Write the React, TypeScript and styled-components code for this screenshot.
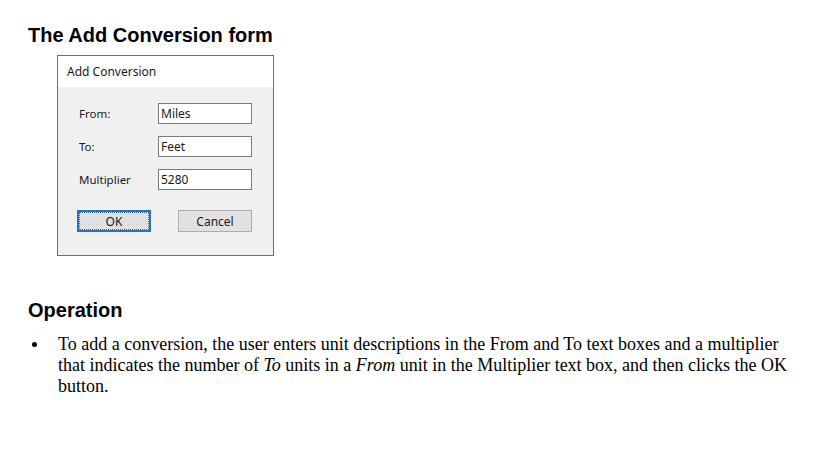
import React from "react";
import styled, { createGlobalStyle } from "styled-components";

const GlobalStyle = createGlobalStyle`
	html, body {
		margin: 0;
		padding: 0;
		background: #ffffff;
	}
	body {
		width: 825px;
		height: 462px;
		overflow: hidden;
	}
`;

const Page = styled.div`
	padding: 23px 0 0 28px;
	color: #000;
`;

const Heading = styled.h2`
	margin: 0;
	font-family: "Liberation Sans", Arial, sans-serif;
	font-weight: bold;
	font-size: 20px;
	line-height: 24px;
`;

const Dialog = styled.div`
	margin: 8px 0 0 29px;
	width: 215px;
	height: 199px;
	border: 1px solid #6f6f6f;
	background: #f0f0f0;
	display: flex;
	flex-direction: column;
	font-family: "Noto Sans", "Open Sans", sans-serif;
	font-size: 11.5px;
	color: #1a1a1a;
`;

const TitleBar = styled.div`
	height: 31px;
	background: #ffffff;
	padding-left: 9px;
	display: flex;
	align-items: center;
	font-size: 12px;
`;

const Body = styled.div`
	padding: 16px 0 0 21px;
	display: flex;
	flex-direction: column;
	gap: 12px;
`;

const Row = styled.div`
	display: flex;
	align-items: center;
	height: 21px;
`;

const Label = styled.span`
	width: 79px;
`;

const TextBox = styled.div`
	box-sizing: border-box;
	width: 94px;
	height: 21px;
	border: 1px solid #7a7a7a;
	background: #ffffff;
	padding-left: 2px;
	display: flex;
	align-items: center;
	font-size: 12px;
`;

const ButtonRow = styled.div`
	display: flex;
	gap: 27px;
	margin-top: 8px;
	margin-left: -2px;
`;

const Button = styled.div<{ $focused?: boolean }>`
	box-sizing: border-box;
	width: 74px;
	height: 22px;
	background: #e1e1e1;
	border: ${(p) => (p.$focused ? "2px solid #2f6fb8" : "1px solid #adadad")};
	display: flex;
	align-items: center;
	justify-content: center;
	font-size: 12px;
	position: relative;
	${(p) =>
		p.$focused &&
		`
		&::after {
			content: "";
			position: absolute;
			inset: 0;
			border: 1px dotted #3a6ea5;
		}
	`}
`;

const Section = styled.div`
	margin-top: 42px;
`;

const BulletList = styled.ul`
	margin: 12px 0 0 0;
	padding: 0;
	list-style: none;
	font-family: "Liberation Serif", "Times New Roman", serif;
	font-size: 18px;
	line-height: 21px;
	width: 766px;
`;

const Bullet = styled.li`
	position: relative;
	padding-left: 30px;
	&::before {
		content: "";
		position: absolute;
		left: 4px;
		top: 8px;
		width: 5px;
		height: 5px;
		border-radius: 50%;
		background: #000;
	}
`;

export default function App() {
	return (
		<Page>
			<GlobalStyle />
			<Heading>The Add Conversion form</Heading>
			<Dialog>
				<TitleBar>Add Conversion</TitleBar>
				<Body>
					<Row>
						<Label>From:</Label>
						<TextBox>Miles</TextBox>
					</Row>
					<Row>
						<Label>To:</Label>
						<TextBox>Feet</TextBox>
					</Row>
					<Row>
						<Label>Multiplier</Label>
						<TextBox>5280</TextBox>
					</Row>
					<ButtonRow>
						<Button $focused>OK</Button>
						<Button>Cancel</Button>
					</ButtonRow>
				</Body>
			</Dialog>
			<Section>
				<Heading>Operation</Heading>
				<BulletList>
					<Bullet>
						To add a conversion, the user enters unit descriptions in the From and To text boxes and a
						multiplier that indicates the number of <i>To</i> units in a <i>From</i> unit in the
						Multiplier text box, and then clicks the OK button.
					</Bullet>
				</BulletList>
			</Section>
		</Page>
	);
}
